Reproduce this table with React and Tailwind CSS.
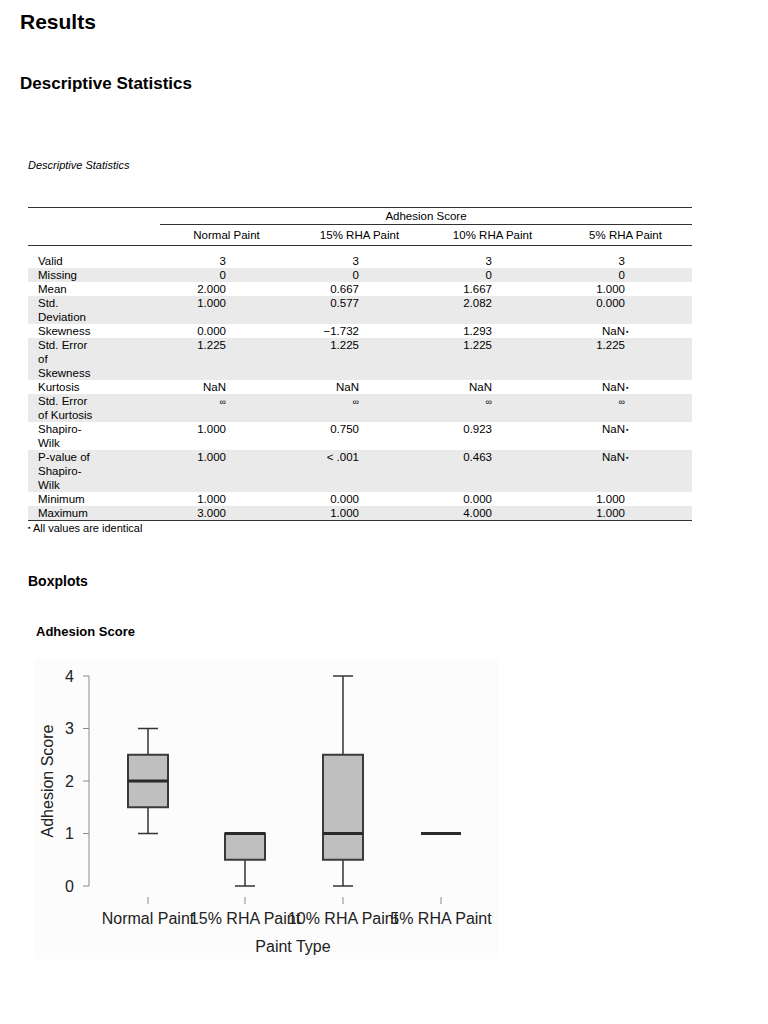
import React from 'react'

const cols = ['Normal Paint', '15% RHA Paint', '10% RHA Paint', '5% RHA Paint']

// values per row; a trailing "*" marks a footnote
const rows = [
  { label: 'Valid', v: ['3', '3', '3', '3'] },
  { label: 'Missing', v: ['0', '0', '0', '0'] },
  { label: 'Mean', v: ['2.000', '0.667', '1.667', '1.000'] },
  { label: 'Std. Deviation', v: ['1.000', '0.577', '2.082', '0.000'] },
  { label: 'Skewness', v: ['0.000', '\u22121.732', '1.293', 'NaN*'] },
  { label: 'Std. Error of Skewness', v: ['1.225', '1.225', '1.225', '1.225'] },
  { label: 'Kurtosis', v: ['NaN', 'NaN', 'NaN', 'NaN*'] },
  { label: 'Std. Error of Kurtosis', v: ['\u221E', '\u221E', '\u221E', '\u221E'] },
  { label: 'Shapiro-Wilk', v: ['1.000', '0.750', '0.923', 'NaN*'] },
  { label: 'P-value of Shapiro-Wilk', v: ['1.000', '< .001', '0.463', 'NaN*'] },
  { label: 'Minimum', v: ['1.000', '0.000', '0.000', '1.000'] },
  { label: 'Maximum', v: ['3.000', '1.000', '4.000', '1.000'] },
]

function Cell({ value }) {
  const marked = value.endsWith('*')
  const text = marked ? value.slice(0, -1) : value
  return (
    <div className="pr-[67px] text-right">
      <span className="relative">
        {text === '\u221E' ? <span className="text-[9px]">{text}</span> : text}
        {marked && <span className="absolute left-full top-0 pl-[1px] text-[7px]">&#9642;</span>}
      </span>
    </div>
  )
}

function DescriptivesTable() {
  return (
    <div className="w-[664px] text-[11.5px] text-black">
      <div className="border-t border-[#333]">
        <div className="grid grid-cols-[132px_repeat(4,133px)]">
          <div />
          <div className="col-span-4 h-[17px] border-b border-[#333] text-center leading-[17px]">Adhesion Score</div>
        </div>
        <div className="grid grid-cols-[132px_repeat(4,133px)] border-b border-[#333]">
          <div />
          {cols.map((c) => (
            <div key={c} className="h-[20px] text-center leading-[20px]">{c}</div>
          ))}
        </div>
      </div>
      <div className="border-b border-[#333] pt-[8px] leading-[14px]">
        {rows.map((r, i) => (
          <div key={r.label} className={`grid grid-cols-[132px_repeat(4,133px)] ${i % 2 === 1 ? 'bg-[#eaeaea]' : ''}`}>
            <div className="pl-[10px]">
              <div className="w-[58px]">{r.label}</div>
            </div>
            {r.v.map((v, j) => (
              <Cell key={j} value={v} />
            ))}
          </div>
        ))}
      </div>
      <p className="text-[11px] leading-[14px]">
        <span className="text-[7px] align-top">&#9642;</span> All values are identical
      </p>
    </div>
  )
}

// y(v) for the plot, 0 at 227, 1 unit = 52.5px
const y = (v) => 227 - 52.5 * v

const boxes = [
  { x: 113, lo: 1, q1: 1.5, med: 2, q3: 2.5, hi: 3 },
  { x: 210, lo: 0, q1: 0.5, med: 1, q3: 1, hi: 1 },
  { x: 308, lo: 0, q1: 0.5, med: 1, q3: 2.5, hi: 4 },
  { x: 406, lo: 1, q1: 1, med: 1, q3: 1, hi: 1 },
]

function Boxplot() {
  return (
    <div className="ml-[7px] h-[300px] w-[464px] bg-[#fcfcfc]">
      <svg width="464" height="300" viewBox="0 0 464 300" fontFamily="'Liberation Sans', Arial, sans-serif">
        <line x1="54" y1="17" x2="54" y2="227" stroke="#8a8a8a" strokeWidth="1" />
        {[0, 1, 2, 3, 4].map((t) => (
          <g key={t}>
            <line x1="48" y1={y(t)} x2="54" y2={y(t)} stroke="#8a8a8a" strokeWidth="1" />
            <text x="39" y={y(t)} textAnchor="end" dominantBaseline="central" fontSize="16" fill="#222">{t}</text>
          </g>
        ))}
        <text x="12" y="122" transform="rotate(-90 12 122)" textAnchor="middle" dominantBaseline="central" fontSize="16" fill="#222">Adhesion Score</text>

        {boxes.map((b, i) => (
          <g key={i}>
            {b.hi > b.q3 && (
              <>
                <line x1={b.x} y1={y(b.hi)} x2={b.x} y2={y(b.q3)} stroke="#333" strokeWidth="1.5" />
                <line x1={b.x - 10} y1={y(b.hi)} x2={b.x + 10} y2={y(b.hi)} stroke="#333" strokeWidth="1.5" />
              </>
            )}
            {b.lo < b.q1 && (
              <>
                <line x1={b.x} y1={y(b.q1)} x2={b.x} y2={y(b.lo)} stroke="#333" strokeWidth="1.5" />
                <line x1={b.x - 10} y1={y(b.lo)} x2={b.x + 10} y2={y(b.lo)} stroke="#333" strokeWidth="1.5" />
              </>
            )}
            {b.q3 > b.q1 && (
              <rect x={b.x - 20} y={y(b.q3)} width="40" height={y(b.q1) - y(b.q3)} fill="#bfbfbf" stroke="#3a3a3a" strokeWidth="2" />
            )}
            <line x1={b.x - 20} y1={y(b.med)} x2={b.x + 20} y2={y(b.med)} stroke="#2a2a2a" strokeWidth="3" />
            <line x1={b.x} y1="238" x2={b.x} y2="245" stroke="#8a8a8a" strokeWidth="1" />
            <text x={b.x} y="259" textAnchor="middle" dominantBaseline="central" fontSize="16" fill="#222">{cols[i]}</text>
          </g>
        ))}
        <text x="258" y="287" textAnchor="middle" dominantBaseline="central" fontSize="16" fill="#222">Paint Type</text>
      </svg>
    </div>
  )
}

export default function App() {
  return (
    <div className="min-h-screen bg-white pl-[20px] pt-[9px] pb-10 font-['Liberation_Sans',Arial,sans-serif] text-black">
      <h1 className="text-[21px] font-bold leading-[26px]">Results</h1>
      <h2 className="mt-[38px] text-[17px] font-bold leading-[22px]">Descriptive Statistics</h2>

      <div className="pl-[8px]">
        <p className="mt-[63px] text-[11px] italic leading-[14px]">Descriptive Statistics</p>
        <div className="mt-[35px]">
          <DescriptivesTable />
        </div>

        <h3 className="mt-[37px] text-[14px] font-bold leading-[18px]">Boxplots</h3>
        <h4 className="mt-[34px] pl-[8px] text-[13px] font-bold leading-[16px]">Adhesion Score</h4>
        <div className="mt-[19px]">
          <Boxplot />
        </div>
      </div>
    </div>
  )
}
